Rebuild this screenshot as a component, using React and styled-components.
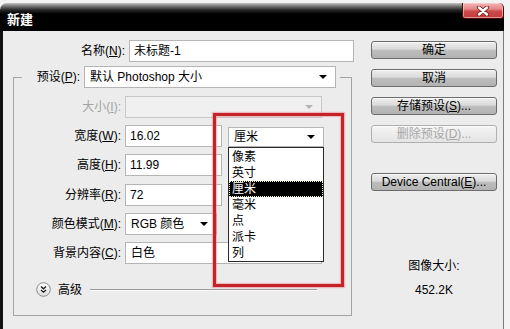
import React from 'react';
import styled, { createGlobalStyle } from 'styled-components';

const UI_FONT = '"Liberation Sans", "Noto Sans CJK SC", sans-serif';

const GlobalStyle = createGlobalStyle`
  html, body {
    margin: 0;
    padding: 0;
    background: #f3f3f3;
  }
  body {
    width: 510px;
    height: 329px;
    overflow: hidden;
    font-family: ${UI_FONT};
    font-size: 12px;
    color: #000;
  }
`;

const Page = styled.div`
  position: relative;
  width: 510px;
  height: 329px;
  padding-top: 3px;
  box-sizing: border-box;
`;

const Window = styled.div`
  width: 504px;
  height: 326px;
  display: flex;
  flex-direction: column;
`;

const TitleBar = styled.div`
  height: 28px;
  flex: none;
  display: flex;
  align-items: center;
  justify-content: space-between;
  padding-left: 7px;
  border-radius: 7px 7px 0 0;
  background: linear-gradient(#c4c4c4 0, #7a7a7a 3px, #262626 7px, #000 11px, #000 100%);
`;

const Title = styled.span`
  color: #fff;
  font-weight: bold;
  font-size: 13px;
  letter-spacing: 0;
  padding-top: 3px;
`;

const CloseButton = styled.div`
  align-self: flex-start;
  width: 42px;
  height: 16px;
  box-sizing: border-box;
  border: 1px solid #4a0c0c;
  border-top: none;
  border-radius: 0 5px 3px 3px;
  background: linear-gradient(#f3b4b4 0%, #e58686 40%, #cc4a4a 55%, #c43c3c 100%);
  box-shadow: inset 0 0 0 1px rgba(255, 220, 220, 0.55);
  display: flex;
  align-items: center;
  justify-content: center;
`;

const Body = styled.div`
  flex: 1;
  display: flex;
  background: #ececec;
  border-left: 3px solid #111;
  border-right: 1px solid #7c7c7c;
`;

const LeftCol = styled.div`
  width: 352px;
  display: flex;
  flex-direction: column;
`;

const RightCol = styled.div`
  width: 126px;
  margin-left: 16px;
  padding-top: 10px;
  display: flex;
  flex-direction: column;
  gap: 10px;
`;

const Row = styled.div`
  display: flex;
  align-items: flex-start;
  height: 22px;
`;

const NameRow = styled(Row)`
  margin-top: 9px;
`;

const Label = styled.label`
  width: ${p => p.$w}px;
  flex: none;
  margin-right: 4px;
  text-align: right;
  line-height: 22px;
  white-space: nowrap;
  color: ${p => (p.$disabled ? '#a3a3a3' : '#000')};
`;

const TextBox = styled.div`
  width: ${p => p.$w}px;
  height: 22px;
  box-sizing: border-box;
  border: 1px solid #b5b5b5;
  background: #fff;
  padding-left: 4px;
  line-height: 20px;
  white-space: nowrap;
`;

const SelectBox = styled(TextBox)`
  position: relative;
  padding-left: 5px;
  background: ${p => (p.$disabled ? '#f0f0f0' : '#fff')};
  border-color: ${p => (p.$disabled ? '#c8c8c8' : '#b5b5b5')};
`;

const Arrow = styled.span`
  position: absolute;
  right: 8px;
  top: 50%;
  margin-top: -2px;
  width: 0;
  height: 0;
  border-left: 4px solid transparent;
  border-right: 4px solid transparent;
  border-top: 4px solid ${p => (p.$disabled ? '#b4b4b4' : '#000')};
`;

const GroupBox = styled.fieldset`
  margin: 4px 0 0 10px;
  width: 339px;
  box-sizing: border-box;
  min-width: 0;
  border: 1px solid #a4a4a4;
  padding: 0 0 17px 8px;
`;

const Legend = styled.legend`
  padding: 0 4px 0 0;
  margin: 0;
`;

const LegendRow = styled(Row)``;

const FieldStack = styled.div`
  display: flex;
  flex-direction: column;
  gap: 7.2px;
  padding-top: 8px;
`;

const UnitWrap = styled.div`
  position: relative;
  margin: 2px 0 0 6px;
`;

const UnitSelect = styled(SelectBox)`
  height: 20px;
  line-height: 18px;
`;

const UnitList = styled.ul`
  position: absolute;
  left: 0;
  top: 100%;
  z-index: 3;
  width: 96px;
  box-sizing: border-box;
  margin: 0;
  padding: 1px 0 0;
  list-style: none;
  background: #fff;
  border: 1px solid #2a2a2a;
`;

const UnitItem = styled.li`
  height: 16px;
  line-height: 16px;
  padding-left: 3px;
  background: ${p => (p.$active ? '#000' : 'transparent')};
  color: ${p => (p.$active ? '#fff' : '#000')};
  outline: ${p => (p.$active ? '1px dotted #f4f0c8' : 'none')};
  outline-offset: -1px;
`;

const AdvancedRow = styled.div`
  display: flex;
  align-items: center;
  height: 16px;
  margin-top: 18px;
  padding-left: 14px;
  margin-right: 34px;
`;

const AdvancedText = styled.span`
  margin-left: 7px;
  line-height: 16px;
`;

const Rule = styled.div`
  flex: 1;
  margin-left: 8px;
  border-top: 1px solid #9a9a9a;
  border-bottom: 1px solid #fafafa;
`;

const Button = styled.div`
  width: 126px;
  height: 18px;
  box-sizing: border-box;
  border: 1px solid ${p => (p.$disabled ? '#b0b0b0' : '#6c6c6c')};
  border-radius: 3px;
  background: ${p =>
    p.$disabled
      ? 'linear-gradient(#f6f6f6 0%, #ececec 50%, #e4e4e4 100%)'
      : 'linear-gradient(#efefef 0%, #dadada 45%, #bdbdbd 52%, #b3b3b3 100%)'};
  box-shadow: inset 0 1px 0 rgba(255, 255, 255, 0.7);
  color: ${p => (p.$disabled ? '#a6a6a6' : '#000')};
  text-align: center;
  line-height: 16px;
  white-space: nowrap;
  margin-top: ${p => p.$gapTop || 0}px;
`;

const SizeInfo = styled.div`
  margin-top: 57px;
  display: flex;
  flex-direction: column;
  align-items: center;
  gap: 8px;
  line-height: 16px;
`;

const Annotation = styled.div`
  position: absolute;
  left: 213px;
  top: 113px;
  width: 131px;
  height: 174px;
  box-sizing: border-box;
  border: 3px solid #c5232b;
  box-shadow: 0 0 1px 1px rgba(236, 140, 140, 0.55), inset 0 0 1px 1px rgba(236, 140, 140, 0.55);
  pointer-events: none;
  z-index: 5;
`;

const units = ['像素', '英寸', '厘米', '毫米', '点', '派卡', '列'];

const CloseGlyph = () => (
  <svg width="14" height="10" viewBox="0 0 14 10">
    <path d="M3 1.5 L11 8.5 M11 1.5 L3 8.5" stroke="#7a1c1c" strokeWidth="4.2" strokeLinecap="round" />
    <path d="M3 1.5 L11 8.5 M11 1.5 L3 8.5" stroke="#fff" strokeWidth="2.4" strokeLinecap="round" />
  </svg>
);

const ExpandIcon = () => (
  <svg width="15" height="15" viewBox="0 0 15 15">
    <defs>
      <linearGradient id="exp" x1="0" y1="0" x2="0" y2="1">
        <stop offset="0" stopColor="#ffffff" />
        <stop offset="1" stopColor="#dcdcdc" />
      </linearGradient>
    </defs>
    <circle cx="7.5" cy="7.5" r="6.8" fill="url(#exp)" stroke="#8a8a8a" />
    <path d="M5 4.6 L7.5 6.8 L10 4.6 M5 8 L7.5 10.2 L10 8" fill="none" stroke="#1e1e1e" strokeWidth="1.3" />
  </svg>
);

const App = () => (
  <Page>
    <GlobalStyle />
    <Window>
      <TitleBar>
        <Title>新建</Title>
        <CloseButton>
          <CloseGlyph />
        </CloseButton>
      </TitleBar>
      <Body>
        <LeftCol>
          <NameRow>
            <Label $w={122}>
              名称(<u>N</u>):
            </Label>
            <TextBox $w={225}>未标题-1</TextBox>
          </NameRow>
          <GroupBox>
            <Legend>
              <LegendRow>
                <Label $w={58}>
                  预设(<u>P</u>):
                </Label>
                <SelectBox $w={252}>
                  默认 Photoshop 大小
                  <Arrow />
                </SelectBox>
              </LegendRow>
            </Legend>
            <FieldStack>
              <Row>
                <Label $w={99} $disabled>
                  大小(<u>I</u>):
                </Label>
                <SelectBox $w={197} $disabled>
                  <Arrow $disabled />
                </SelectBox>
              </Row>
              <Row>
                <Label $w={99}>
                  宽度(<u>W</u>):
                </Label>
                <TextBox $w={97}>16.02</TextBox>
                <UnitWrap>
                  <UnitSelect $w={96}>
                    厘米
                    <Arrow />
                  </UnitSelect>
                  <UnitList>
                    {units.map(u => (
                      <UnitItem key={u} $active={u === '厘米'}>
                        {u}
                      </UnitItem>
                    ))}
                  </UnitList>
                </UnitWrap>
              </Row>
              <Row>
                <Label $w={99}>
                  高度(<u>H</u>):
                </Label>
                <TextBox $w={97}>11.99</TextBox>
              </Row>
              <Row>
                <Label $w={99}>
                  分辨率(<u>R</u>):
                </Label>
                <TextBox $w={97}>72</TextBox>
              </Row>
              <Row>
                <Label $w={99}>
                  颜色模式(<u>M</u>):
                </Label>
                <SelectBox $w={92}>
                  RGB 颜色
                  <Arrow />
                </SelectBox>
              </Row>
              <Row>
                <Label $w={99}>
                  背景内容(<u>C</u>):
                </Label>
                <SelectBox $w={197}>
                  白色
                  <Arrow />
                </SelectBox>
              </Row>
            </FieldStack>
            <AdvancedRow>
              <ExpandIcon />
              <AdvancedText>高级</AdvancedText>
              <Rule />
            </AdvancedRow>
          </GroupBox>
        </LeftCol>
        <RightCol>
          <Button>确定</Button>
          <Button>取消</Button>
          <Button>
            存储预设(<u>S</u>)...
          </Button>
          <Button $disabled>
            删除预设(<u>D</u>)...
          </Button>
          <Button $gapTop={20}>
            Device Central(<u>E</u>)...
          </Button>
          <SizeInfo>
            <span>图像大小:</span>
            <span>452.2K</span>
          </SizeInfo>
        </RightCol>
      </Body>
    </Window>
    <Annotation />
  </Page>
);

export default App;
